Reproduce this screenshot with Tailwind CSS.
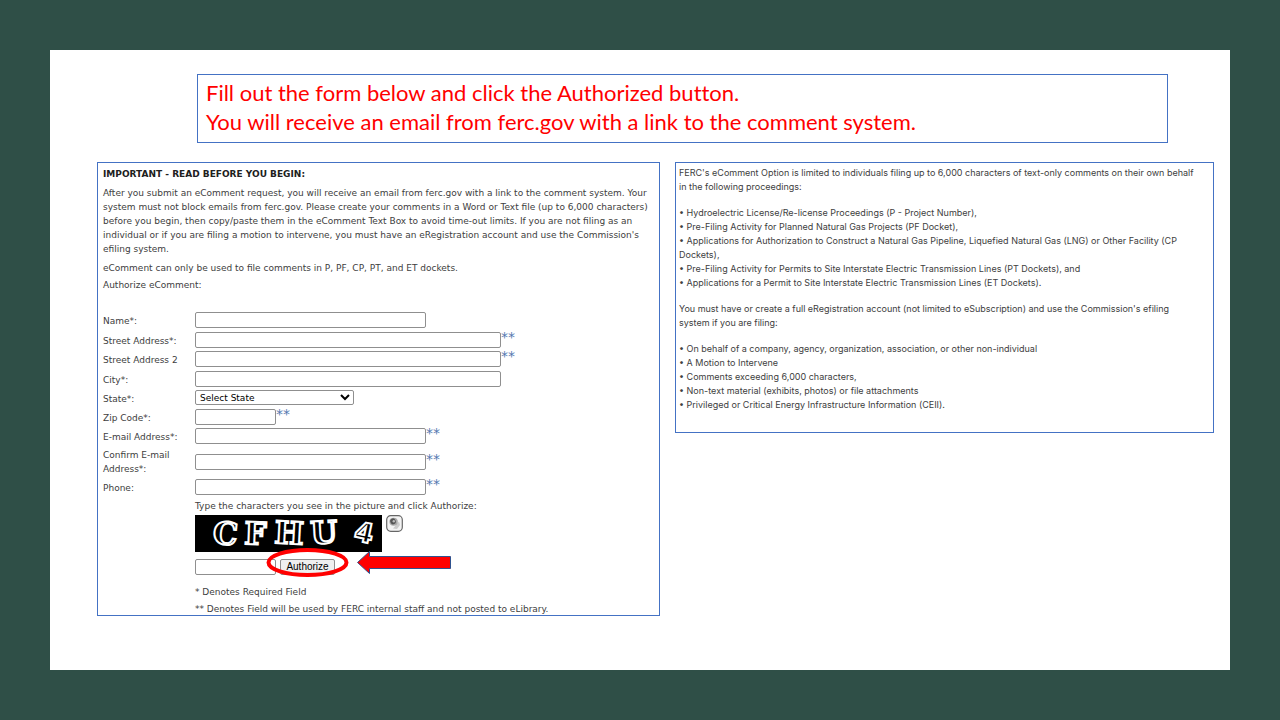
<!DOCTYPE html>
<html lang="en">
<head>
  <meta charset="UTF-8" />
  <meta name="viewport" content="width=device-width, initial-scale=1.0" />
  <title>FERC eComment - Authorize</title>
  <script src="https://cdn.jsdelivr.net/npm/@tailwindcss/browser@4"></script>
</head>
<body class="bg-[#2f4f47] min-h-screen p-[50px] flex flex-col font-['DejaVu_Sans',sans-serif] text-[9px] leading-[14px] text-[#404040]">

  <main class="bg-white grow pt-6 pl-[47px] pr-4 pb-[50px]">

    <!-- Instructions -->
    <h1 class="ml-[100px] mr-[46px] border border-[#4472c4] px-2 pt-[3px] pb-[6px] font-['Lato',sans-serif] text-[22px] leading-[29px] text-[#ff0000] [font-variant-ligatures:none]">
      Fill out the form below and click the Authorized button.<br>
      You will receive an email from ferc.gov with a link to the comment system.
    </h1>

    <div class="mt-[19px] grid grid-cols-[563fr_539fr] items-start gap-[15px]">

      <!-- Request form -->
      <form class="border border-[#4472c4] px-[5px] pt-1" onsubmit="return false">
        <h2 class="font-bold text-[#202020]">IMPORTANT - READ BEFORE YOU BEGIN:</h2>
        <p class="mt-[5px]">After you submit an eComment request, you will receive an email from ferc.gov with a link to the comment system. Your<br>system must not block emails from ferc.gov. Please create your comments in a Word or Text file (up to 6,000 characters)<br>before you begin, then copy/paste them in the eComment Text Box to avoid time-out limits. If you are not filing as an<br>individual or if you are filing a motion to intervene, you must have an eRegistration account and use the Commission's<br>efiling system.</p>
        <p class="mt-[5px]">eComment can only be used to file comments in P, PF, CP, PT, and ET dockets.</p>
        <p class="mt-[3px]">Authorize eComment:</p>

        <div class="mt-5">
          <div class="flex items-start h-5">
            <label for="name" class="w-[92px] pt-[2px]">Name*:</label>
            <input id="name" type="text" class="w-[231px] h-4 px-1 border border-[#8f8f8f] rounded-[2px]">
          </div>
          <div class="flex items-start h-[19px]">
            <label for="street" class="w-[92px] pt-[2px]">Street Address*:</label>
            <input id="street" type="text" class="w-[306px] h-4 px-1 border border-[#8f8f8f] rounded-[2px]">
            <span class="text-sm leading-[10px] text-[#5577b0]">**</span>
          </div>
          <div class="flex items-start h-5">
            <label for="street2" class="w-[92px] pt-[2px]">Street Address 2</label>
            <input id="street2" type="text" class="w-[306px] h-4 px-1 border border-[#8f8f8f] rounded-[2px]">
            <span class="text-sm leading-[10px] text-[#5577b0]">**</span>
          </div>
          <div class="flex items-start h-[19px]">
            <label for="city" class="w-[92px] pt-[2px]">City*:</label>
            <input id="city" type="text" class="w-[306px] h-4 px-1 border border-[#8f8f8f] rounded-[2px]">
          </div>
          <div class="flex items-start h-[19px]">
            <label for="state" class="w-[92px] pt-[2px]">State*:</label>
            <select id="state" class="w-[159px] h-[15px] border border-[#8f8f8f] rounded-[2px] bg-white text-black leading-[13px]">
              <option>Select State</option>
            </select>
          </div>
          <div class="flex items-start h-[19px]">
            <label for="zip" class="w-[92px] pt-[2px]">Zip Code*:</label>
            <input id="zip" type="text" class="w-[81px] h-4 px-1 border border-[#8f8f8f] rounded-[2px]">
            <span class="text-sm leading-[10px] text-[#5577b0]">**</span>
          </div>
          <div class="flex items-start h-5">
            <label for="email" class="w-[92px] pt-[2px]">E-mail Address*:</label>
            <input id="email" type="text" class="w-[231px] h-4 px-1 border border-[#8f8f8f] rounded-[2px]">
            <span class="text-sm leading-[10px] text-[#5577b0]">**</span>
          </div>
          <div class="flex items-center h-7">
            <label for="confirm" class="w-[92px]">Confirm E-mail<br>Address*:</label>
            <input id="confirm" type="text" class="w-[231px] h-4 px-1 border border-[#8f8f8f] rounded-[2px]">
            <span class="h-4 text-sm leading-[10px] text-[#5577b0]">**</span>
          </div>
          <div class="mt-[3px] flex items-start h-5">
            <label for="phone" class="w-[92px] pt-[2px]">Phone:</label>
            <input id="phone" type="text" class="w-[231px] h-4 px-1 border border-[#8f8f8f] rounded-[2px]">
            <span class="text-sm leading-[10px] text-[#5577b0]">**</span>
          </div>
        </div>

        <!-- Captcha -->
        <div class="pl-[92px]">
          <label for="captcha" class="block">Type the characters you see in the picture and click Authorize:</label>
          <div class="mt-[2px] flex items-start gap-1">
            <svg class="w-[187px] h-[37px] bg-black" viewBox="0 0 187 37" role="img" aria-label="Captcha">
              <g fill="#000" stroke="#fff" stroke-width="2" font-family="DejaVu Serif, serif" font-weight="bold">
                <text x="17" y="28" font-size="31" rotate="6">C</text>
                <text x="49" y="29" font-size="31" rotate="2">F</text>
                <text x="79" y="28" font-size="31" rotate="3">H</text>
                <text x="116" y="29" font-size="31" rotate="-3">U</text>
                <text x="158" y="25" font-size="27" font-family="DejaVu Sans, sans-serif" rotate="12">4</text>
              </g>
            </svg>
            <button type="button" aria-label="Play audio" class="w-[17px] h-[17px]">
              <svg viewBox="0 0 17 17" class="block w-[17px] h-[17px]">
                <rect x=".7" y=".7" width="15.6" height="15.6" rx="4" fill="#f4f4f4" stroke="#666" stroke-width="1.2"/>
                <path d="M7 13.500l6-7 1 3.500-3 4z" fill="#ccc"/>
                <ellipse cx="7.6" cy="6.800" rx="4.200" ry="4" fill="#aaa"/>
                <ellipse cx="7" cy="6.400" rx="2.700" ry="3" fill="#555" transform="rotate(-25 7 6.4)"/>
                <circle cx="7.800" cy="6.300" r="1.200" fill="#bbb"/>
              </svg>
            </button>
          </div>
          <div class="mt-[7px] flex items-start gap-1">
            <input id="captcha" type="text" class="w-[81px] h-4 px-1 border border-[#8f8f8f] rounded-[2px]">
            <div class="relative">
              <button type="submit" class="block w-[55px] h-4 border border-[#8f8f8f] rounded-[2px] bg-[#efefef] font-['Liberation_Sans',sans-serif] text-[10px] leading-[14px] text-black">Authorize</button>
              <!-- Red ring and arrow pointing at the button -->
              <svg class="absolute -left-[14px] -top-3 w-[186px] h-[31px] max-w-none pointer-events-none" viewBox="0 0 186 31" fill="none">
                <ellipse cx="41.5" cy="15.5" rx="39" ry="12.5" stroke="#f00" stroke-width="4"/>
                <path d="M91.500 15.500l12-11v5h81v12h-81v5z" fill="#f00" stroke="#2f528f"/>
              </svg>
            </div>
          </div>
          <p class="mt-[10px]">* Denotes Required Field</p>
          <p class="mt-1 leading-[12px]">** Denotes Field will be used by FERC internal staff and not posted to eLibrary.</p>
        </div>
      </form>

      <!-- Eligibility notes -->
      <section class="border border-[#4472c4] px-[3px] pt-[3px] pb-5 flex flex-col gap-3 font-['Inter',sans-serif]">
        <p>FERC's eComment Option is limited to individuals filing up to 6,000 characters of text-only comments on their own behalf<br>in the following proceedings:</p>
        <ul>
          <li>• Hydroelectric License/Re-license Proceedings (P - Project Number),</li>
          <li>• Pre-Filing Activity for Planned Natural Gas Projects (PF Docket),</li>
          <li>• Applications for Authorization to Construct a Natural Gas Pipeline, Liquefied Natural Gas (LNG) or Other Facility (CP<br>Dockets),</li>
          <li>• Pre-Filing Activity for Permits to Site Interstate Electric Transmission Lines (PT Dockets), and</li>
          <li>• Applications for a Permit to Site Interstate Electric Transmission Lines (ET Dockets).</li>
        </ul>
        <p>You must have or create a full eRegistration account (not limited to eSubscription) and use the Commission's efiling<br>system if you are filing:</p>
        <ul>
          <li>• On behalf of a company, agency, organization, association, or other non-individual</li>
          <li>• A Motion to Intervene</li>
          <li>• Comments exceeding 6,000 characters,</li>
          <li>• Non-text material (exhibits, photos) or file attachments</li>
          <li>• Privileged or Critical Energy Infrastructure Information (CEII).</li>
        </ul>
      </section>
    </div>
  </main>

</body>
</html>
